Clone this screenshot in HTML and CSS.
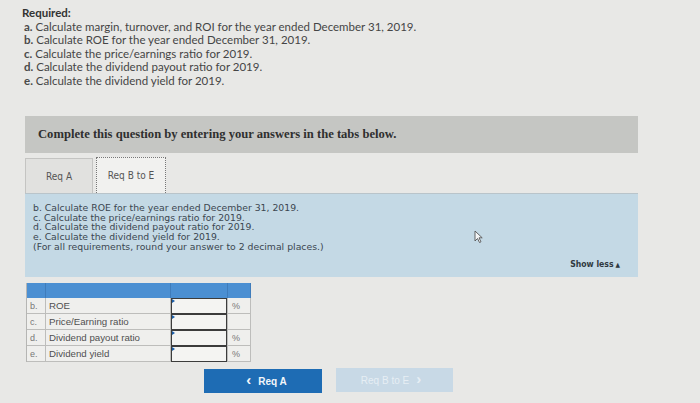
FILE: index.html
```html
<!DOCTYPE html>
<html>
<head>
<meta charset="utf-8">
<link rel="stylesheet" href="styles.css">
</head>
<body>
<div class="page">
  <div class="required">
    <div class="req-title">Required:</div>
    <div class="req-item"><b>a.</b> Calculate margin, turnover, and ROI for the year ended December 31, 2019.</div>
    <div class="req-item"><b>b.</b> Calculate ROE for the year ended December 31, 2019.</div>
    <div class="req-item"><b>c.</b> Calculate the price/earnings ratio for 2019.</div>
    <div class="req-item"><b>d.</b> Calculate the dividend payout ratio for 2019.</div>
    <div class="req-item"><b>e.</b> Calculate the dividend yield for 2019.</div>
  </div>

  <div class="banner">Complete this question by entering your answers in the tabs below.</div>

  <div class="tabs">
    <div class="tab">Req A</div>
    <div class="tab active">Req B to E</div>
  </div>

  <div class="panel">
    <div class="panel-text">
      <div>b. Calculate ROE for the year ended December 31, 2019.</div>
      <div>c. Calculate the price/earnings ratio for 2019.</div>
      <div>d. Calculate the dividend payout ratio for 2019.</div>
      <div>e. Calculate the dividend yield for 2019.</div>
      <div>(For all requirements, round your answer to 2 decimal places.)</div>
    </div>
    <div class="show-less">Show less<span class="tri">▲</span></div>
    <svg class="cursor" width="9" height="13" viewBox="0 0 9 13"><path d="M1 1 L1 11 L3.5 8.5 L5.5 12.5 L7 11.8 L5 7.8 L8.2 7.8 Z" fill="#f4f6f7" stroke="#555" stroke-width="0.9" stroke-linejoin="round"/></svg>
  </div>

  <div class="grid">
    <div class="row head">
      <div class="c1"></div><div class="c2"></div><div class="c3"></div><div class="c4"></div>
    </div>
    <div class="row">
      <div class="c1">b.</div><div class="c2">ROE</div><div class="c3"><span class="inp"></span></div><div class="c4">%</div>
    </div>
    <div class="row">
      <div class="c1">c.</div><div class="c2">Price/Earning ratio</div><div class="c3"><span class="inp"></span></div><div class="c4"></div>
    </div>
    <div class="row">
      <div class="c1">d.</div><div class="c2">Dividend payout ratio</div><div class="c3"><span class="inp"></span></div><div class="c4">%</div>
    </div>
    <div class="row">
      <div class="c1">e.</div><div class="c2">Dividend yield</div><div class="c3"><span class="inp"></span></div><div class="c4">%</div>
    </div>
  </div>

  <div class="nav">
    <div class="btn prev"><span class="chev">&lsaquo;</span> Req A</div>
    <div class="btn next">Req B to E <span class="chev">&rsaquo;</span></div>
  </div>
</div>
</body>
</html>
```

FILE: styles.css
```css
html, body {
  margin: 0;
  padding: 0;
}
body {
  background: #e8e8e6;
  width: 700px;
  height: 403px;
  overflow: hidden;
}
.page {
  position: relative;
  width: 700px;
  height: 403px;
}
.required {
  padding: 6px 0 0 22px;
  font-family: Lato, "Liberation Sans", sans-serif;
  font-size: 11.5px;
  line-height: 13.6px;
  color: #454545;
  height: 111px;
  box-sizing: border-box;
}
.req-title {
  font-weight: bold;
  color: #333;
}
.req-item {
  padding-left: 2px;
}
.req-item b {
  color: #4a4a4a;
}
.banner {
  margin: 5px 0 0 25px;
  width: 613px;
  height: 37px;
  box-sizing: border-box;
  background: #c5c6c3;
  font-family: "Liberation Serif", serif;
  font-weight: bold;
  font-size: 12.6px;
  color: #2f2f2f;
  padding: 0 0 0 13px;
  display: flex;
  align-items: center;
}
.tabs {
  margin: 4px 0 0 25px;
  display: flex;
  align-items: flex-end;
  gap: 3px;
  height: 36px;
}
.tab {
  font-family: "DejaVu Sans Condensed", "DejaVu Sans", sans-serif;
  font-size: 10px;
  color: #555;
  background: #e1e1df;
  border: 1px solid #c4c4c2;
  border-bottom: none;
  width: 68px;
  height: 35px;
  box-sizing: border-box;
  display: flex;
  align-items: center;
  justify-content: center;
}
.tab.active {
  background: #f1f1ef;
  border: 1px dotted #777;
  border-bottom: none;
  width: 70px;
  height: 36px;
}
.panel {
  position: relative;
  margin-left: 25px;
  width: 613px;
  height: 84px;
  box-sizing: border-box;
  background: #c4d9e5;
  border-top: 1px solid #b9c4ca;
  padding: 9px 0 0 8px;
}
.panel-text {
  font-family: "DejaVu Sans", sans-serif;
  font-size: 9.3px;
  line-height: 9.7px;
  color: #3b4650;
}
.show-less {
  position: absolute;
  right: 18px;
  bottom: 8px;
  font-family: "DejaVu Sans Condensed", "DejaVu Sans", sans-serif;
  font-weight: bold;
  font-size: 8.6px;
  color: #2f3840;
}
.show-less .tri {
  font-size: 6.5px;
  margin-left: 2px;
}
.cursor {
  position: absolute;
  left: 449px;
  top: 36px;
}
.grid {
  margin: 6px 0 0 26px;
  width: 224px;
  border-left: 1px solid #b5b5b3;
  font-family: "Liberation Sans", Arial, sans-serif;
  font-size: 9.7px;
  color: #555;
}
.row {
  display: flex;
  height: 16px;
  border-bottom: 1px solid #bdbdbb;
  box-sizing: border-box;
  background: #efefed;
}
.row > div {
  border-right: 1px solid #bdbdbb;
  box-sizing: border-box;
  display: flex;
  align-items: center;
}
.row.head {
  height: 15px;
  background: #4b8fd2;
  border-bottom: none;
}
.row.head > div {
  border-right: 1px solid #3f7cbb;
}
.c1 { width: 19px; padding-left: 3px; color: #777; font-size: 9px; }
.c2 { width: 125px; padding-left: 3px; color: #505050; }
.c3 { width: 57px; position: relative; }
.c4 { width: 23px; padding-left: 4px; color: #777; font-size: 9px; }
.inp {
  position: absolute;
  left: 0;
  top: 0;
  right: 0;
  bottom: -1px;
  background: #f4f4f2;
  border: 1px solid #3c3c3c;
}
.inp::before {
  content: "";
  position: absolute;
  left: 0;
  top: 0;
  border-left: 3px solid #1b5ea8;
  border-top: 2px solid transparent;
  border-bottom: 2px solid transparent;
}
.nav {
  display: flex;
  align-items: flex-start;
  gap: 14px;
  margin: 6px 0 0 204px;
}
.btn {
  width: 118px;
  height: 24px;
  display: flex;
  align-items: center;
  justify-content: center;
  font-family: "Liberation Sans", Arial, sans-serif;
  font-weight: bold;
  font-size: 10px;
  box-sizing: border-box;
}
.btn.prev {
  background: #1e6cb4;
  color: #f2f6fa;
  margin-top: 1px;
}
.btn.next {
  width: 117px;
  background: #c8d9e6;
  color: #e6eef4;
  font-weight: normal;
}
.chev {
  font-size: 15px;
  font-weight: bold;
  margin: 0 7px;
  line-height: 10px;
  position: relative;
  top: -1px;
}
```
